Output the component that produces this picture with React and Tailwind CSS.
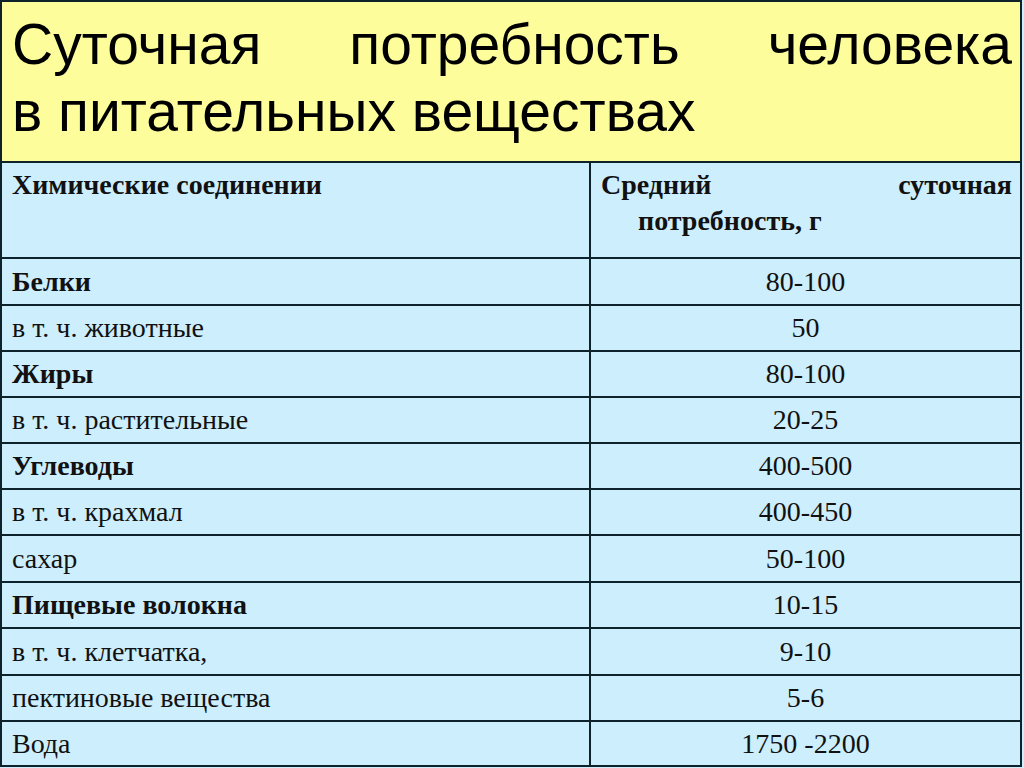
const rows = [
  { name: 'Белки', value: '80-100', bold: true, h: 'h-[47px]' },
  { name: 'в т. ч. животные', value: '50', h: 'h-[46px]' },
  { name: 'Жиры', value: '80-100', bold: true, h: 'h-[46px]' },
  { name: 'в т. ч. растительные', value: '20-25', h: 'h-[46px]' },
  { name: 'Углеводы', value: '400-500', bold: true, h: 'h-[46px]' },
  { name: 'в т. ч. крахмал', value: '400-450', h: 'h-[46px]' },
  { name: 'сахар', value: '50-100', h: 'h-[47px]' },
  { name: 'Пищевые волокна', value: '10-15', bold: true, h: 'h-[46px]' },
  { name: 'в т. ч. клетчатка,', value: '9-10', h: 'h-[47px]' },
  { name: 'пектиновые вещества', value: '5-6', h: 'h-[46px]' },
  { name: 'Вода', value: '1750 -2200', h: 'h-[45px]' },
];

export default function App() {
  return (
    <div className="w-[1024px] h-[768px] bg-[#cdeefc] overflow-hidden">
      <div className="w-[1022px] h-[767px] border-2 border-[#0e222c] flex flex-col">
        {/* Title */}
        <div className="h-[159px] bg-[#fdfd9c] pl-[10px] pr-[8px] pt-[9px] text-black font-['Liberation_Sans',Arial,sans-serif] text-[57px] leading-[67px]">
          <div className="flex justify-between">
            <span>Суточная</span>
            <span>потребность</span>
            <span>человека</span>
          </div>
          <div>в питательных веществах</div>
        </div>

        {/* Table */}
        <div className="flex-1 bg-[#cdeefc] font-['Liberation_Serif','Times_New_Roman',serif] text-[#111] text-[28px]">
          <div className="flex h-[96px] border-t-2 border-[#0e222c] font-bold leading-[36px]">
            <div className="w-[589px] border-r-2 border-[#0e222c] pl-[10px] pt-[4px]">
              Химические соединении
            </div>
            <div className="flex-1 pl-[10px] pr-[8px] pt-[4px]">
              <div className="flex justify-between">
                <span>Средний</span>
                <span>суточная</span>
              </div>
              <div className="pl-[37px]">потребность, г</div>
            </div>
          </div>
          {rows.map((r) => (
            <div key={r.name} className={`flex ${r.h} border-t-2 border-[#0e222c]`}>
              <div
                className={`w-[589px] border-r-2 border-[#0e222c] pl-[10px] flex items-center ${
                  r.bold ? 'font-bold' : ''
                }`}
              >
                {r.name}
              </div>
              <div className="flex-1 flex items-center justify-center">{r.value}</div>
            </div>
          ))}
        </div>
      </div>
    </div>
  );
}
